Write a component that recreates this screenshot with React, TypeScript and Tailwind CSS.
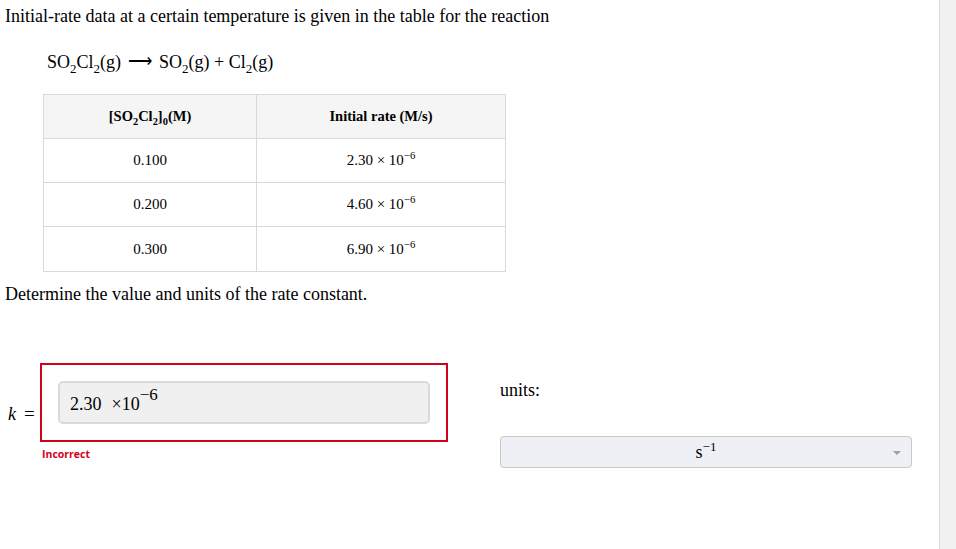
import React from "react";

function Sub({ children }: { children: React.ReactNode }) {
  return <span className="text-[0.72em] align-[-0.35em] leading-[0]">{children}</span>;
}

function Sup({ children }: { children: React.ReactNode }) {
  return <span className="text-[0.72em] align-[0.55em] leading-[0]">{children}</span>;
}

export default function App() {
  const rows = [
    ["0.100", "2.30"],
    ["0.200", "4.60"],
    ["0.300", "6.90"],
  ];
  return (
    <div className="w-[956px] h-[549px] bg-white overflow-hidden flex text-black font-['Liberation_Serif','Times_New_Roman',serif]">
      <main className="flex-1 flex flex-col font-['Liberation_Serif','Times_New_Roman',serif]">
        <p className="text-[18px] leading-[20px] pt-[6px] pl-[5px]">
          Initial-rate data at a certain temperature is given in the table for the reaction
        </p>
        <div className="text-[18px] leading-[20px] mt-[26px] pl-[47px] flex items-center">
          <span>
            SO<Sub>2</Sub>Cl<Sub>2</Sub>(g)
          </span>
          <span className="mx-[7px] text-[17px]">⟶</span>
          <span>
            SO<Sub>2</Sub>(g) + Cl<Sub>2</Sub>(g)
          </span>
        </div>
        <div className="mt-[22px] ml-[43px] w-[463px] border border-[#d9d9d9] text-[14.5px]">
          <div className="grid grid-cols-[213px_1fr] h-[44px] bg-[#f5f5f5] font-bold border-b border-[#d9d9d9]">
            <div className="flex items-center justify-center border-r border-[#d9d9d9]">
              <span>
                [SO<Sub>2</Sub>Cl<Sub>2</Sub>]<Sub>0</Sub>(M)
              </span>
            </div>
            <div className="flex items-center justify-center">Initial rate (M/s)</div>
          </div>
          {rows.map(([a, b], i) => (
            <div
              key={a}
              className={`grid grid-cols-[213px_1fr] h-[44px] text-[15px] ${i < 2 ? "border-b border-[#d9d9d9]" : ""}`}
            >
              <div className="flex items-center justify-center border-r border-[#d9d9d9]">{a}</div>
              <div className="flex items-center justify-center">
                <span>
                  {b} × 10<Sup>−6</Sup>
                </span>
              </div>
            </div>
          ))}
        </div>
        <p className="text-[18px] leading-[20px] mt-[12px] pl-[5px]">
          Determine the value and units of the rate constant.
        </p>
        <div className="mt-[59px] flex">
          <div className="flex">
            <div className="w-[40px] pl-[8px] pt-[41px] text-[18px] leading-[20px] whitespace-nowrap">
              <span className="italic">k</span>
              <span className="ml-[8px] text-[19px]">=</span>
            </div>
            <div className="flex flex-col">
              <div className="w-[408px] h-[79px] border-2 border-[#d0021b] pl-[16px] pt-[16px]">
                <div className="w-[372px] h-[43px] rounded-[5px] bg-[#f0f0f0] border-2 border-[#dadada] flex items-center pl-[10px] pt-[3px] text-[18px]">
                  <span>2.30</span>
                  <span className="ml-[10px]">×10</span>
                  <span className="text-[17px] relative -top-[9px]">−6</span>
                </div>
              </div>
              <div className="mt-[5px] ml-[2px] text-[10.5px] font-bold text-[#d0021b] leading-[14px] font-['Open_Sans','Noto_Sans',sans-serif]">
                Incorrect
              </div>
            </div>
          </div>
          <div className="ml-[52px] flex flex-col">
            <div className="text-[18px] leading-[20px] mt-[17px]">units:</div>
            <div className="mt-[36px] w-[412px] h-[32px] rounded-[4px] border border-[#c8c8c8] bg-[#eff0f5] relative flex items-center justify-center text-[18px]">
              <span className="relative top-[1px] leading-[20px]">
                s<span className="text-[13px] relative -top-[7px]">−1</span>
              </span>
              <span className="absolute right-[10px] top-[14px] w-0 h-0 border-l-[4px] border-r-[4px] border-t-[4px] border-l-transparent border-r-transparent border-t-[#a0a0a0]" />
            </div>
          </div>
        </div>
      </main>
      <aside className="w-[17px] h-full bg-[#f1f1f1] border-l border-[#dcdcdc]" />
    </div>
  );
}
